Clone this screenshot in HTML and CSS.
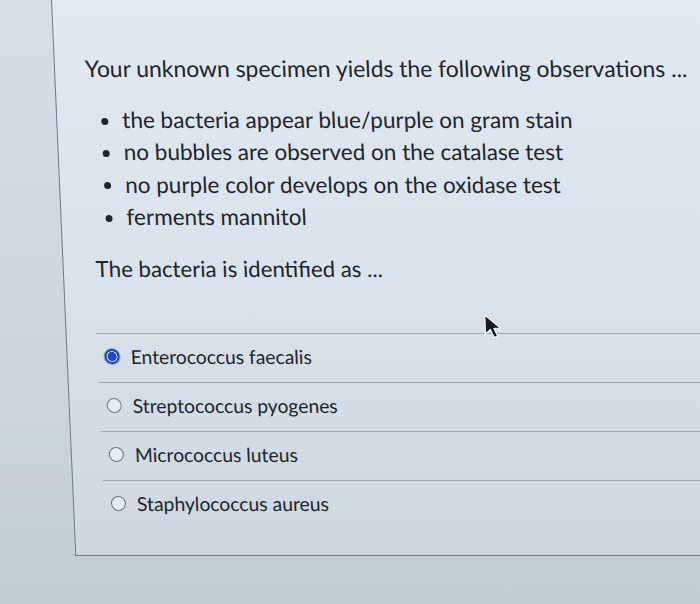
FILE: index.html
```html
<!DOCTYPE html>
<html>
<head>
<meta charset="utf-8">
<link rel="stylesheet" href="styles.css">
</head>
<body>
<div class="scene">
  <div class="panel">
    <h1 class="title">Your unknown specimen yields the following observations ...</h1>
    <ul class="obs">
      <li>the bacteria appear blue/purple on gram stain</li>
      <li>no bubbles are observed on the catalase test</li>
      <li>no purple color develops on the oxidase test</li>
      <li>ferments mannitol</li>
    </ul>
    <p class="prompt">The bacteria is identified as ...</p>
    <div class="answers">
      <label class="answer"><span class="radio checked"></span><span>Enterococcus faecalis</span></label>
      <label class="answer"><span class="radio"></span><span>Streptococcus pyogenes</span></label>
      <label class="answer"><span class="radio"></span><span>Micrococcus luteus</span></label>
      <label class="answer"><span class="radio"></span><span>Staphylococcus aureus</span></label>
    </div>
    <svg class="cursor" width="22" height="28" viewBox="0 0 22 28"><path d="M3 2 L3 21 L8 16.5 L11.5 24.5 L15 23 L11.5 15.5 L18 15 Z" fill="#15181c" stroke="#f4f6f8" stroke-width="1.2" stroke-linejoin="round"/></svg>
  </div>
</div>
</body>
</html>
```
FILE: styles.css
```css
html, body {
  margin: 0;
  padding: 0;
}
body {
  width: 700px;
  height: 604px;
  overflow: hidden;
  background: linear-gradient(180deg, #d6dfe6 0%, #cbd6de 60%, #c1cdd5 100%);
  font-family: Lato, "Open Sans", sans-serif;
  color: #20252b;
}
.scene {
  padding-left: 51px;
  transform: skewX(2.5deg);
  transform-origin: 0 0;
}
.panel {
  position: relative;
  height: 556px;
  box-sizing: border-box;
  border-left: 1.5px solid #6f7c86;
  border-bottom: 1.5px solid #6f7c86;
  background: linear-gradient(180deg, #e1e9f1 0%, #d9e3eb 50%, #ccd7df 100%);
  padding-left: 30px;
  padding-top: 52px;
}
.title {
  margin: 0;
  font-size: 22.9px;
  font-weight: 400;
  line-height: 32px;
  white-space: nowrap;
}
.obs {
  margin: 20px 0 0;
  padding-left: 14px;
  list-style: none;
  font-size: 22.5px;
  line-height: 32.3px;
  white-space: nowrap;
}
.obs li {
  display: flex;
  align-items: center;
  gap: 14px;
  height: 32.3px;
}
.obs li::before {
  content: "";
  flex: none;
  width: 7px;
  height: 7px;
  border-radius: 50%;
  background: #1f242a;
  margin-top: 2px;
}
.prompt {
  margin: 20px 0 0;
  font-size: 22.2px;
  line-height: 32px;
  padding-left: 2px;
}
.answers {
  margin-top: 48px;
}
.answer {
  display: flex;
  align-items: center;
  gap: 11px;
  height: 49px;
  padding-bottom: 3px;
  box-sizing: border-box;
  border-top: 1.5px solid #9ba8b2;
  padding-left: 7px;
  font-size: 19.3px;
}
.radio {
  width: 15px;
  height: 15px;
  border-radius: 50%;
  border: 1.6px solid #6a757f;
  box-sizing: border-box;
  background: #e6edf2;
}
.radio.checked {
  width: 15px;
  height: 15px;
  border: 2px solid #1b3da8;
  background: radial-gradient(circle, #1546e0 0 4.3px, #e8eef3 4.8px);
  box-shadow: 0 0 0 1px #8aa0dc;
}
.cursor {
  position: absolute;
  left: 416px;
  top: 313px;
}
```
